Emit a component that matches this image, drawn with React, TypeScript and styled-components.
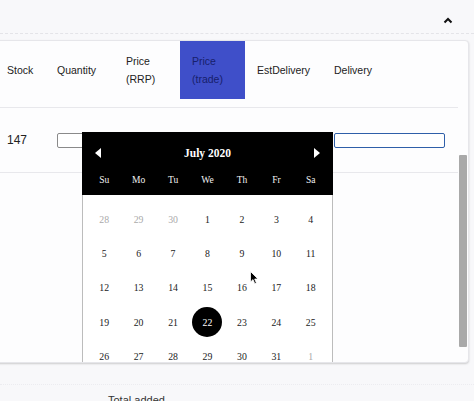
import React from "react"
import styled, { createGlobalStyle } from "styled-components"

const GlobalStyle = createGlobalStyle`
  html, body {
    margin: 0;
    padding: 0;
    background: #f8f8fa;
    overflow: hidden;
  }
  * {
    box-sizing: border-box;
  }
`

const Page = styled.div`
  width: 474px;
  height: 401px;
  overflow: hidden;
  font-family: "Liberation Sans", Arial, sans-serif;
  color: #222;
`

const TopBar = styled.div`
  height: 34px;
  display: flex;
  align-items: flex-end;
  justify-content: flex-end;
  padding: 0 21px 9px 0;
  border-bottom: 1px dashed #e4e4e8;
`

const Card = styled.div`
  margin: 6px 5px 0 -6px;
  height: 323px;
  display: flex;
  background: #fdfdfe;
  border: 1px solid #e6e6ea;
  border-radius: 4px;
  box-shadow: 0 1px 2px rgba(0, 0, 0, 0.18);
  overflow: hidden;
`

const TableArea = styled.div`
  flex: 1;
  min-width: 0;
`

const ScrollTrack = styled.div`
  width: 10px;
  padding: 114px 1px 0 1px;
`

const ScrollThumb = styled.div`
  width: 8px;
  height: 192px;
  background: #a9a9a9;
  border-radius: 1px;
`

const Row = styled.div<{ $height: number }>`
  position: relative;
  display: grid;
  grid-template-columns: 50px 69px 66px 65px 77px 135px;
  height: ${(p) => p.$height}px;
  border-bottom: 1px solid #e8e8ec;
`

const HeadCell = styled.div<{ $active?: boolean }>`
  height: 58px;
  display: flex;
  align-items: center;
  padding-left: 12px;
  font-size: 10.5px;
  line-height: 18px;
  background: ${(p) => (p.$active ? "#3f4fc9" : "transparent")};
  color: ${(p) => (p.$active ? "#17206b" : "#222")};
`

const BodyCell = styled.div`
  display: flex;
  align-items: center;
  padding: 0 12px;
  font-size: 12px;
`

const Input = styled.div<{ $focused?: boolean }>`
  width: 100%;
  height: 15px;
  background: #fff;
  border: ${(p) => (p.$focused ? "1.5px solid #2f5fa9" : "1px solid #8a8a8a")};
  border-radius: 2px;
`

const Calendar = styled.div`
  position: absolute;
  left: 87px;
  top: 24px;
  width: 251px;
  z-index: 5;
  font-family: "Liberation Serif", "Times New Roman", serif;
`

const CalHeader = styled.div`
  background: #000;
  color: #f2f2f2;
  height: 63px;
  padding: 0 5px;
`

const CalNav = styled.div`
  height: 41px;
  display: flex;
  align-items: center;
  justify-content: space-between;
  padding: 0 8px 0 8px;
  font-weight: bold;
  font-size: 11.5px;
  color: #fff;
`

const NavArrow = styled.svg`
  display: block;
`

const WeekRow = styled.div`
  display: grid;
  grid-template-columns: repeat(7, 1fr);
  height: 13px;
  align-items: center;
  font-size: 9.5px;
  text-align: center;
`

const CalBody = styled.div`
  background: #fff;
  border-left: 1px solid #bcbcbc;
  border-right: 1px solid #bcbcbc;
  padding: 7px 4px 0 4px;
  display: grid;
  grid-template-columns: repeat(7, 1fr);
  grid-auto-rows: 34.3px;
`

const Day = styled.div<{ $muted?: boolean; $selected?: boolean }>`
  display: flex;
  align-items: center;
  justify-content: center;
  font-size: 9.8px;
  color: ${(p) => (p.$selected ? "#fff" : p.$muted ? "#aaa" : "#222")};

  span {
    width: 30px;
    height: 30px;
    border-radius: 50%;
    display: flex;
    align-items: center;
    justify-content: center;
    background: ${(p) => (p.$selected ? "#000" : "transparent")};
  }
`

const Cursor = styled.svg`
  position: absolute;
  left: 250px;
  top: 271px;
  z-index: 10;
`

const Footer = styled.div`
  margin-top: 21px;
  border-top: 1px dotted #ececf0;
  padding: 9px 0 0 108px;
  font-size: 11px;
  line-height: 13px;
  color: #333;
`

const headers = [
  { label: "Stock" },
  { label: "Quantity" },
  { label: "Price", sub: "(RRP)" },
  { label: "Price", sub: "(trade)", active: true },
  { label: "EstDelivery" },
  { label: "Delivery" },
]

const weekDays = ["Su", "Mo", "Tu", "We", "Th", "Fr", "Sa"]

const days: { n: number; muted?: boolean }[] = [
  { n: 28, muted: true },
  { n: 29, muted: true },
  { n: 30, muted: true },
  ...Array.from({ length: 31 }, (_, i) => ({ n: i + 1 })),
  { n: 1, muted: true },
]

export default function App() {
  return (
    <Page>
      <GlobalStyle />
      <TopBar>
        <svg width="10" height="7" viewBox="0 0 10 7">
          <polyline points="1.5,5.5 5,2 8.5,5.5" fill="none" stroke="#111" strokeWidth="2" />
        </svg>
      </TopBar>
      <Card>
        <TableArea>
          <Row $height={67}>
            {headers.map((h, i) => (
              <HeadCell key={i} $active={h.active}>
                <div>
                  {h.label}
                  {h.sub && <br />}
                  {h.sub}
                </div>
              </HeadCell>
            ))}
          </Row>
          <Row $height={65}>
            <BodyCell>147</BodyCell>
            <BodyCell>
              <Input />
            </BodyCell>
            <BodyCell />
            <BodyCell />
            <BodyCell />
            <BodyCell>
              <Input $focused />
            </BodyCell>
            <Calendar>
              <CalHeader>
                <CalNav>
                  <NavArrow width="6" height="10" viewBox="0 0 6 10">
                    <polygon points="6,0 6,10 0,5" fill="#fff" />
                  </NavArrow>
                  <span>July 2020</span>
                  <NavArrow width="6" height="10" viewBox="0 0 6 10">
                    <polygon points="0,0 0,10 6,5" fill="#fff" />
                  </NavArrow>
                </CalNav>
                <WeekRow>
                  {weekDays.map((d) => (
                    <div key={d}>{d}</div>
                  ))}
                </WeekRow>
              </CalHeader>
              <CalBody>
                {days.map((d, i) => (
                  <Day key={i} $muted={d.muted} $selected={!d.muted && d.n === 22}>
                    <span>{d.n}</span>
                  </Day>
                ))}
              </CalBody>
            </Calendar>
          </Row>
        </TableArea>
        <ScrollTrack>
          <ScrollThumb />
        </ScrollTrack>
      </Card>
      <Footer>Total added</Footer>
      <Cursor width="9" height="14" viewBox="0 0 9 14">
        <path d="M0.5 0.5 L0.5 11 L3 8.6 L4.8 12.8 L6.4 12.1 L4.7 8 L8 8 Z" fill="#000" stroke="#fff" strokeWidth="0.8" />
      </Cursor>
    </Page>
  )
}
